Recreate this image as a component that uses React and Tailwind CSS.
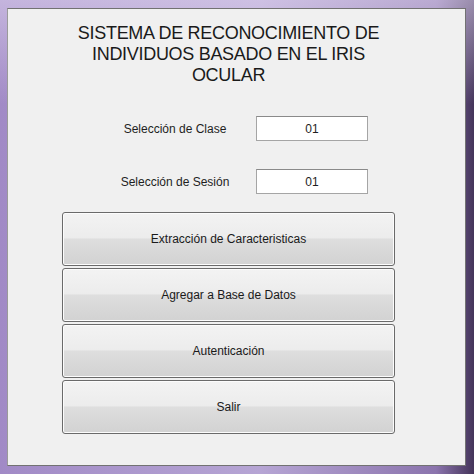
import React from "react";

const buttons = [
  "Extracción de Caracteristicas",
  "Agregar a Base de Datos",
  "Autenticación",
  "Salir",
];

const fields = [
  { label: "Selección de Clase", value: "01" },
  { label: "Selección de Sesión", value: "01" },
];

const App = () => {
  return (
    <div
      className="w-[474px] h-[474px] pl-[7px] pt-[8px] pr-[8px] pb-[8px] bg-[linear-gradient(180deg,rgba(225,215,240,0.55)_0%,rgba(0,0,0,0)_22%),linear-gradient(90deg,#a18ac6_0%,#b6a5d4_55%,#8b74ad_92%,#44345a_100%)]"
      style={{ fontFamily: '"Liberation Sans", Arial, sans-serif' }}
    >
      {/* Main panel */}
      <div className="h-full bg-[#f0f0f0] border border-[#727272] border-l-[#9a9a9a] pt-[14px] pl-[54px]">
        <div className="w-[333px] flex flex-col">
          {/* Title */}
          <h1 className="text-center text-[18px] leading-[21px] tracking-[-0.3px] text-[#1a1a1a] px-3">
            SISTEMA DE RECONOCIMIENTO DE INDIVIDUOS BASADO EN EL IRIS OCULAR
          </h1>

          {/* Fields */}
          <div className="mt-[30px] flex flex-col gap-[28px]">
            {fields.map((f) => (
              <div key={f.label} className="flex items-center">
                <span className="ml-[38px] w-[150px] text-center text-[12px] text-[#1e1e1e]">
                  {f.label}
                </span>
                <div className="ml-[6px] w-[112px] h-[25px] bg-white border border-[#a5a5a5] border-t-[#8a8a8a] flex items-center justify-center text-[12px] text-[#1e1e1e]">
                  {f.value}
                </div>
              </div>
            ))}
          </div>

          {/* Buttons */}
          <div className="mt-[18px] flex flex-col gap-[2px]">
            {buttons.map((b) => (
              <button
                key={b}
                className="h-[54px] w-full rounded-[3px] border border-[#6a6a6a] bg-[linear-gradient(180deg,#f3f3f3_0%,#ececec_48%,#dedede_50%,#d2d2d2_100%)] shadow-[inset_0_0_0_1px_#fcfcfc] text-[12px] text-[#1a1a1a]"
              >
                {b}
              </button>
            ))}
          </div>
        </div>
      </div>
    </div>
  );
};

export default App;
